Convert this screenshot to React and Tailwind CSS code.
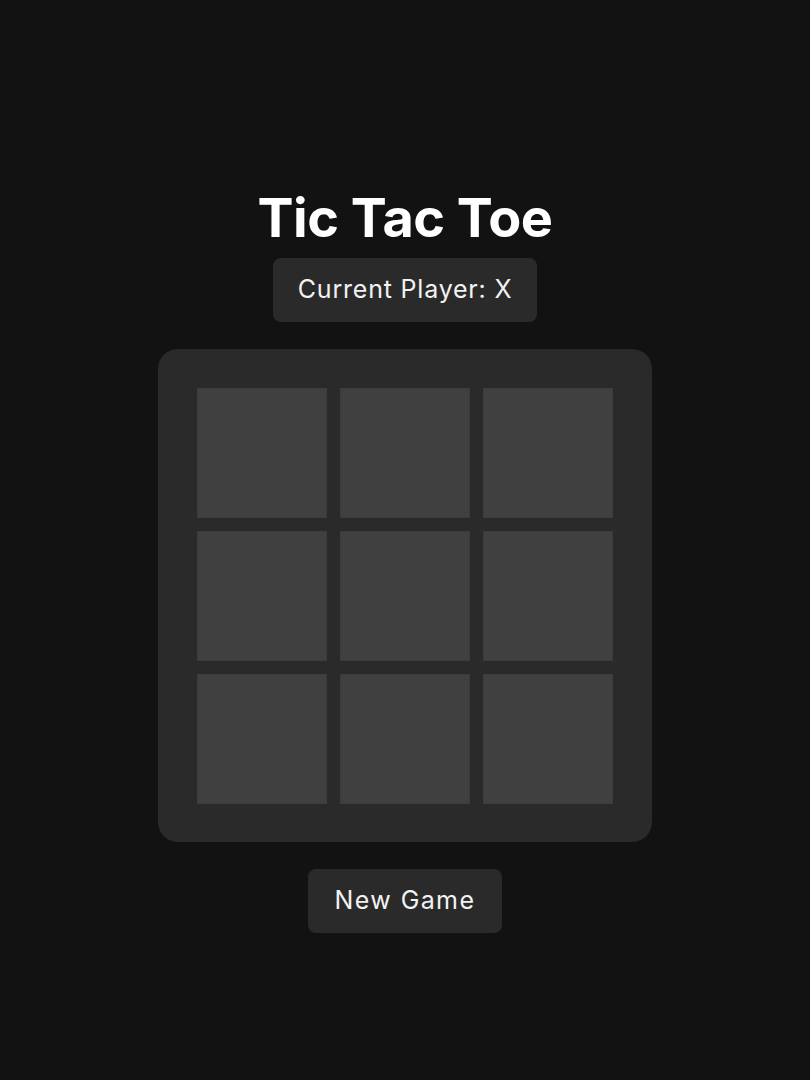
import React from "react";

export default function App() {
  const cells = Array.from({ length: 9 });
  return (
    <div
      className="min-h-screen w-full bg-[#121212] flex flex-col items-center pt-[186px] text-white"
      style={{ fontFamily: '"Inter", "Open Sans", sans-serif' }}
    >
      <h1 className="text-[54px] leading-[64px] font-bold tracking-[-0.5px] text-white">Tic Tac Toe</h1>
      <div className="mt-[8px] h-[64px] w-[264px] rounded-[8px] bg-[#2a2a2a] flex items-center justify-center text-[25px] tracking-[0.8px] text-[#f2f2f2]">
        Current Player: X
      </div>
      <div className="mt-[27px] w-[494px] h-[493px] rounded-[20px] bg-[#2a2a2a] flex items-center justify-center">
        <div className="grid grid-cols-[130px_130px_130px] grid-rows-[130px_130px_130px] gap-[13px]">
          {cells.map((_, i) => (
            <button key={i} className="bg-[#404040] border border-[#3c3c3c]" />
          ))}
        </div>
      </div>
      <button className="mt-[27px] h-[64px] w-[194px] rounded-[8px] bg-[#2a2a2a] flex items-center justify-center text-[25px] tracking-[1.4px] text-[#f2f2f2]">
        New Game
      </button>
    </div>
  );
}
